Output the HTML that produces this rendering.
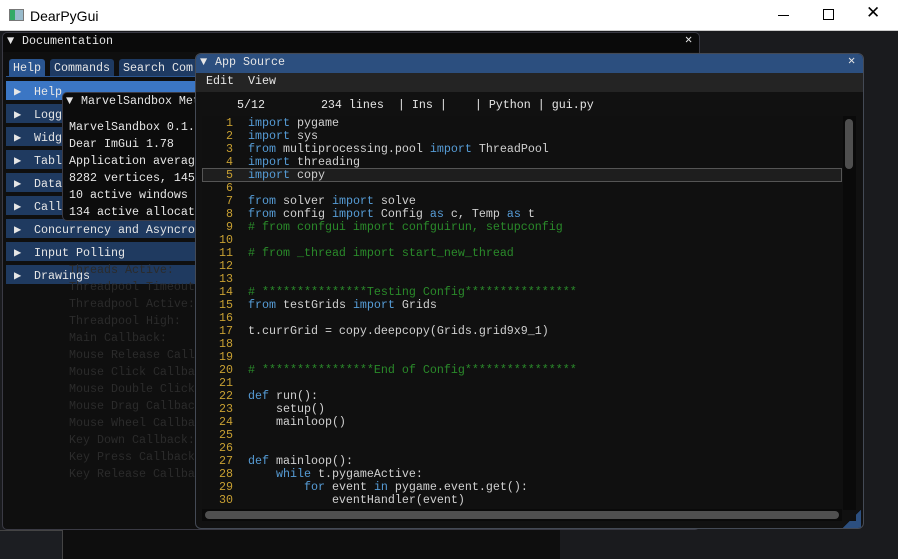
<!DOCTYPE html>
<html><head><style>
*{margin:0;padding:0;box-sizing:border-box}
body{width:898px;height:559px;overflow:hidden;background:#1a1b1e;font-family:"Liberation Mono",monospace;font-size:11.67px;color:#e6e6e6;position:relative}
.a{position:absolute;white-space:pre;line-height:13px}
.k{color:#569cd6}.c{color:#2a8a2a}.n{color:#c8a032}
.h{position:absolute;left:6px;width:190px;height:19px;background:#1f3a60}
</style></head><body>
<div class="a" style="left:0;top:0;width:898px;height:31px;background:#fff;border-bottom:1px solid #ccc"></div>
<div class="a" style="left:9px;top:9px;width:15px;height:12px;border:1px solid #777;background:linear-gradient(90deg,#3a6 0 40%,#9bc 40%)"></div>
<div class="a" style="left:30px;top:8px;font-family:'Liberation Sans',sans-serif;font-size:14px;line-height:16px;color:#000">DearPyGui</div>
<div class="a" style="left:778px;top:15px;width:11px;height:1px;background:#000"></div>
<div class="a" style="left:823px;top:9px;width:11px;height:11px;border:1px solid #000"></div>
<div class="a" style="left:866px;top:6px;font-family:'Liberation Sans',sans-serif;font-size:17px;color:#000">✕</div>
<div class="a" style="left:0;top:530px;width:62px;height:29px;background:#1c1e22;border-top:1px solid #444"></div>
<div class="a" style="left:62px;top:530px;width:498px;height:29px;background:#0e0e0e;border-left:1px solid #444"></div>
<div class="a" style="left:2px;top:32px;width:698px;height:498px;background:#0f0f0f;border:1px solid #3a3a44;border-radius:5px"></div>
<div class="a" style="left:3px;top:33px;width:696px;height:19px;background:#0a0a0a;border-radius:5px 5px 0 0"></div>
<div class="a" style="left:7px;top:35px;font-size:12px">▼</div>
<div class="a" style="left:22px;top:35px">Documentation</div>
<div class="a" style="left:685px;top:34px;font-size:12px">✕</div>
<div class="a" style="left:9px;top:59px;width:36px;height:17px;background:#2a5590;border-radius:3px 3px 0 0"></div>
<div class="a" style="left:13px;top:62px">Help</div>
<div class="a" style="left:50px;top:59px;width:64px;height:17px;background:#1e3a62;border-radius:3px 3px 0 0"></div>
<div class="a" style="left:54px;top:62px">Commands</div>
<div class="a" style="left:119px;top:59px;width:80px;height:17px;background:#1e3a62;border-radius:3px 3px 0 0"></div>
<div class="a" style="left:123px;top:62px">Search Com</div>
<div class="a" style="left:6px;top:76px;width:190px;height:1px;background:#2a5590"></div>
<div class="h" style="top:81px;background:#3b76c4"></div>
<div class="h" style="top:104px"></div>
<div class="h" style="top:127px"></div>
<div class="h" style="top:150px"></div>
<div class="h" style="top:173px"></div>
<div class="h" style="top:196px"></div>
<div class="h" style="top:219px"></div>
<div class="h" style="top:242px"></div>
<div class="h" style="top:265px"></div>
<div class="a" style="left:69px;top:262px;line-height:17px;color:#2b2b2b">Threads Active:
Threadpool Timeout:
Threadpool Active:
Threadpool High:
Main Callback:
Mouse Release Callback:
Mouse Click Callback:
Mouse Double Click Callback:
Mouse Drag Callback:
Mouse Wheel Callback:
Key Down Callback:
Key Press Callback:
Key Release Callback:</div>
<div class="a" style="left:14px;top:81px;font-size:12px;line-height:23px">▶
▶
▶
▶
▶
▶
▶
▶
▶</div>
<div class="a" style="left:34px;top:81px;line-height:23px">Help
Logging and Console Output
Widgets
Tables
Data Storage
Callbacks
Concurrency and Asyncronous
Input Polling
Drawings</div>
<div class="a" style="left:62px;top:92px;width:200px;height:129px;background:#0c0c0c;border:1px solid #3a3a44;border-radius:5px"></div>
<div class="a" style="left:66px;top:95px;font-size:12px">▼</div>
<div class="a" style="left:81px;top:95px">MarvelSandbox Metrics</div>
<div class="a" style="left:69px;top:119px;line-height:17px">MarvelSandbox 0.1.0
Dear ImGui 1.78
Application average
8282 vertices, 1451
10 active windows (
134 active allocati</div>
<div class="a" style="left:195px;top:53px;width:669px;height:476px;background:#111;border:1px solid #444a55;border-radius:6px;overflow:hidden">
 <div class="a" style="left:0;top:0;width:669px;height:19px;background:#2c4f7f"></div>
 <div class="a" style="left:0;top:19px;width:669px;height:19px;background:#242424"></div>
 <div class="a" style="left:645px;top:440px;width:20px;height:40px;background:linear-gradient(135deg,transparent 60%,#2c4f7f 60%)"></div>
</div>
<div class="a" style="left:200px;top:56px;font-size:12px">▼</div>
<div class="a" style="left:215px;top:56px">App Source</div>
<div class="a" style="left:848px;top:55px;font-size:12px">✕</div>
<div class="a" style="left:206px;top:75px">Edit  View</div>
<div class="a" style="left:237px;top:99px">5/12        234 lines  | Ins |    | Python | gui.py</div>
<div class="a" style="left:202px;top:116px;width:654px;height:405px;background:#101010"></div>
<div class="a" style="left:202px;top:168px;width:640px;height:14px;background:#1e1e1e;border:1px solid #555"></div>
<div class="a" style="left:843px;top:116px;width:13px;height:394px;background:#0a0a0a"></div>
<div class="a" style="left:845px;top:119px;width:8px;height:50px;background:#4f4f4f;border-radius:4px"></div>
<div class="a" style="left:202px;top:509px;width:640px;height:12px;background:#0a0a0a"></div>
<div class="a" style="left:205px;top:511px;width:634px;height:8px;background:#505050;border-radius:4px"></div>
<div class="a n" style="left:205px;top:117px;width:28px;text-align:right">1
2
3
4
5
6
7
8
9
10
11
12
13
14
15
16
17
18
19
20
21
22
23
24
25
26
27
28
29
30</div>
<div class="a" style="left:248px;top:117px;color:#d0d0d0"><span class="k">import</span> pygame
<span class="k">import</span> sys
<span class="k">from</span> multiprocessing.pool <span class="k">import</span> ThreadPool
<span class="k">import</span> threading
<span class="k">import</span> copy

<span class="k">from</span> solver <span class="k">import</span> solve
<span class="k">from</span> config <span class="k">import</span> Config <span class="k">as</span> c, Temp <span class="k">as</span> t
<span class="c"># from confgui import confguirun, setupconfig</span>

<span class="c"># from _thread import start_new_thread</span>


<span class="c"># ***************Testing Config****************</span>
<span class="k">from</span> testGrids <span class="k">import</span> Grids

t.currGrid = copy.deepcopy(Grids.grid9x9_1)


<span class="c"># ****************End of Config****************</span>

<span class="k">def</span> run():
    setup()
    mainloop()


<span class="k">def</span> mainloop():
    <span class="k">while</span> t.pygameActive:
        <span class="k">for</span> event <span class="k">in</span> pygame.event.get():
            eventHandler(event)</div>
</body></html>
